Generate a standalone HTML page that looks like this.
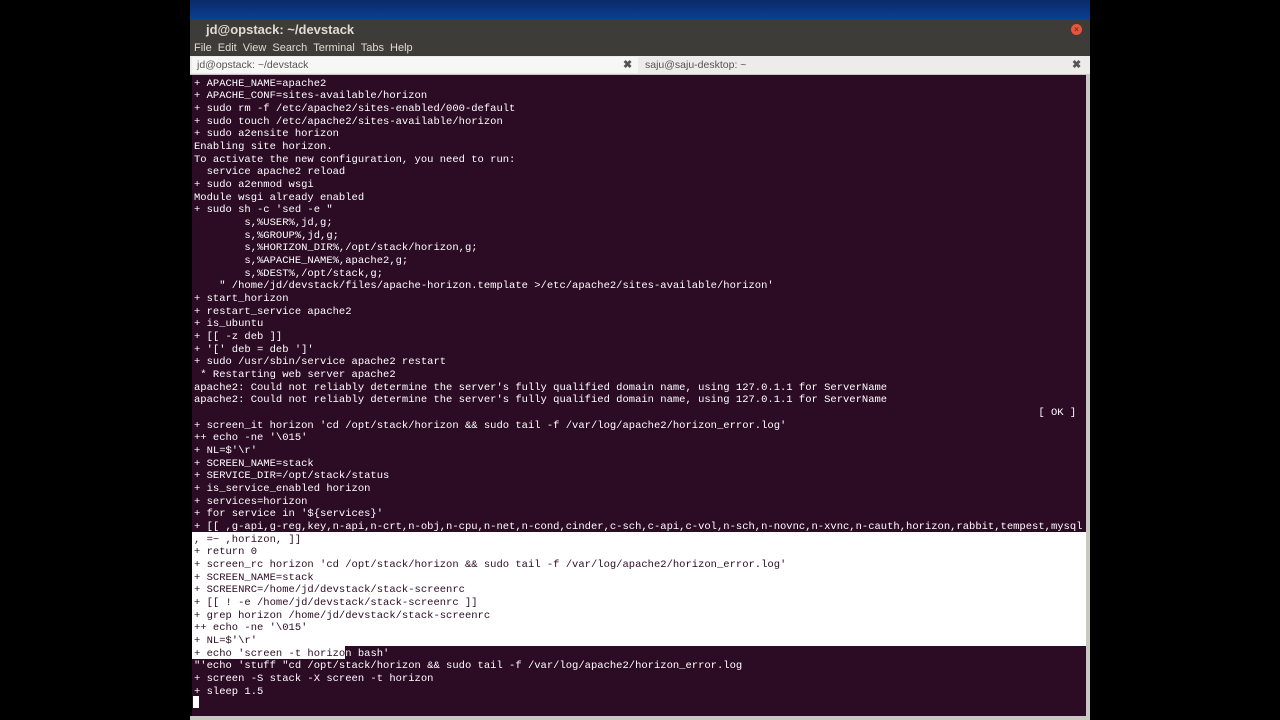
<!DOCTYPE html>
<html><head><meta charset="utf-8"><style>
html,body{margin:0;padding:0;width:1280px;height:720px;background:#000;overflow:hidden;position:relative;font-family:"Liberation Sans",sans-serif}
.blue{position:absolute;left:190px;top:0;width:900px;height:19px;background:linear-gradient(#0b2a66,#0a3f94)}
.title{position:absolute;left:190px;top:19px;width:900px;height:21px;background:#3d3c38;color:#dfdbd2;font-weight:bold;font-size:13px;line-height:21px}
.title span{position:absolute;left:16px}
.close{position:absolute;left:881px;top:5px;width:11px;height:11px;border-radius:50%;background:#e8553a;color:#8a2a18;font-size:8px;line-height:11px;text-align:center}
.menu{position:absolute;left:190px;top:40px;width:900px;height:16px;background:#3d3c38;color:#dfdbd2;font-size:11px;line-height:16px}
.menu span{margin-left:4px;margin-right:2px}
.tabs{position:absolute;left:190px;top:56px;width:900px;height:18px;background:#edecea;border-bottom:1px solid #c8c6c0;font-size:10.5px;color:#555;line-height:18px}
.tab1{position:absolute;left:2px;top:1px;width:446px;height:16px;background:#f7f7f5;padding-left:5px;box-sizing:border-box;line-height:16px}
.x{position:absolute;font-size:11px;color:#555;font-weight:bold}
.term{position:absolute;left:192px;top:75px;width:894px;height:641px;background:#2c0b24}
.sb{position:absolute;left:1086px;top:74px;width:4px;height:646px;background:#c9c7c2}
.bot{position:absolute;left:190px;top:716px;width:900px;height:4px;background:#c9c7c2}
.sel{position:absolute;background:#fff}
pre{position:absolute;left:194px;top:77.5px;margin:0;font-family:"Liberation Mono",monospace;font-size:10.5px;line-height:12.67px;color:#fff;white-space:pre}
.d{color:#2c0b24}
.cur{position:absolute;left:193px;top:696px;width:6px;height:12px;background:#fff}
</style></head><body>
<div class="blue"></div>
<div class="title"><span>jd@opstack: ~/devstack</span><div class="close">×</div></div>
<div class="menu"><span>File</span><span>Edit</span><span>View</span><span>Search</span><span>Terminal</span><span>Tabs</span><span>Help</span></div>
<div class="tabs"><div class="tab1">jd@opstack: ~/devstack</div><span class="x" style="left:433px">✖</span><span style="position:absolute;left:455px">saju@saju-desktop: ~</span><span class="x" style="left:882px">✖</span></div>
<div class="term"></div>
<div class="sb"></div>
<div class="bot"></div>
<div class="sel" style="left:192px;top:532px;width:894px;height:114px"></div>
<div class="sel" style="left:192px;top:646px;width:153px;height:13px"></div>
<pre>+ APACHE_NAME=apache2
+ APACHE_CONF=sites-available/horizon
+ sudo rm -f /etc/apache2/sites-enabled/000-default
+ sudo touch /etc/apache2/sites-available/horizon
+ sudo a2ensite horizon
Enabling site horizon.
To activate the new configuration, you need to run:
  service apache2 reload
+ sudo a2enmod wsgi
Module wsgi already enabled
+ sudo sh -c 'sed -e "
        s,%USER%,jd,g;
        s,%GROUP%,jd,g;
        s,%HORIZON_DIR%,/opt/stack/horizon,g;
        s,%APACHE_NAME%,apache2,g;
        s,%DEST%,/opt/stack,g;
    " /home/jd/devstack/files/apache-horizon.template &gt;/etc/apache2/sites-available/horizon'
+ start_horizon
+ restart_service apache2
+ is_ubuntu
+ [[ -z deb ]]
+ '[' deb = deb ']'
+ sudo /usr/sbin/service apache2 restart
 * Restarting web server apache2
apache2: Could not reliably determine the server's fully qualified domain name, using 127.0.1.1 for ServerName
apache2: Could not reliably determine the server's fully qualified domain name, using 127.0.1.1 for ServerName
                                                                                                                                      [ OK ]
+ screen_it horizon 'cd /opt/stack/horizon &amp;&amp; sudo tail -f /var/log/apache2/horizon_error.log'
++ echo -ne '\015'
+ NL=$'\r'
+ SCREEN_NAME=stack
+ SERVICE_DIR=/opt/stack/status
+ is_service_enabled horizon
+ services=horizon
+ for service in '${services}'
+ [[ ,g-api,g-reg,key,n-api,n-crt,n-obj,n-cpu,n-net,n-cond,cinder,c-sch,c-api,c-vol,n-sch,n-novnc,n-xvnc,n-cauth,horizon,rabbit,tempest,mysql
<span class="d">, =~ ,horizon, ]]
+ return 0
+ screen_rc horizon 'cd /opt/stack/horizon &amp;&amp; sudo tail -f /var/log/apache2/horizon_error.log'
+ SCREEN_NAME=stack
+ SCREENRC=/home/jd/devstack/stack-screenrc
+ [[ ! -e /home/jd/devstack/stack-screenrc ]]
+ grep horizon /home/jd/devstack/stack-screenrc
++ echo -ne '\015'
+ NL=$'\r'
+ echo 'screen -t horizo</span>n bash'
"'echo 'stuff "cd /opt/stack/horizon &amp;&amp; sudo tail -f /var/log/apache2/horizon_error.log
+ screen -S stack -X screen -t horizon
+ sleep 1.5</pre>
<div class="cur"></div>
</body></html>
